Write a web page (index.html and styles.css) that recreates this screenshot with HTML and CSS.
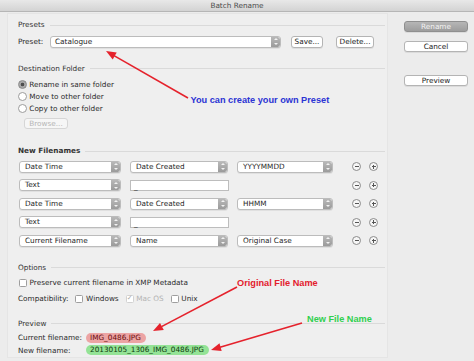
FILE: index.html
```html
<!DOCTYPE html>
<html>
<head>
    <title>Batch Rename</title>
    <link rel="stylesheet" href="styles.css">
</head>
<body>
    <div class="titlebar">Batch Rename</div>

    <div class="main">
        <div class="panel">
            <!-- Presets -->
            <section class="group">
                <div class="group-head">Presets</div>
                <div class="preset-row">
                    <span class="label">Preset:</span>
                    <div class="popup preset-popup"><span>Catalogue</span><i class="stepper"></i></div>
                    <button class="btn save">Save...</button>
                    <button class="btn delete">Delete...</button>
                </div>
            </section>

            <!-- Destination Folder -->
            <section class="group dest">
                <div class="group-head">Destination Folder</div>
                <div class="radios">
                    <div class="radio"><i class="on"></i>Rename in same folder</div>
                    <div class="radio"><i></i>Move to other folder</div>
                    <div class="radio"><i></i>Copy to other folder</div>
                </div>
                <button class="btn browse" disabled>Browse...</button>
            </section>

            <!-- New Filenames -->
            <section class="group names">
                <div class="group-head bold">New Filenames</div>
                <div class="fname-list">
                    <div class="fname-row">
                        <div class="popup"><span>Date Time</span><i class="stepper"></i></div>
                        <div class="popup"><span>Date Created</span><i class="stepper"></i></div>
                        <div class="popup"><span>YYYYMMDD</span><i class="stepper"></i></div>
                        <div class="ops"><i class="circ"></i><i class="circ plus"></i></div>
                    </div>
                    <div class="fname-row">
                        <div class="popup"><span>Text</span><i class="stepper"></i></div>
                        <div class="field">_</div>
                        <div></div>
                        <div class="ops"><i class="circ"></i><i class="circ plus"></i></div>
                    </div>
                    <div class="fname-row">
                        <div class="popup"><span>Date Time</span><i class="stepper"></i></div>
                        <div class="popup"><span>Date Created</span><i class="stepper"></i></div>
                        <div class="popup"><span>HHMM</span><i class="stepper"></i></div>
                        <div class="ops"><i class="circ"></i><i class="circ plus"></i></div>
                    </div>
                    <div class="fname-row">
                        <div class="popup"><span>Text</span><i class="stepper"></i></div>
                        <div class="field">_</div>
                        <div></div>
                        <div class="ops"><i class="circ"></i><i class="circ plus"></i></div>
                    </div>
                    <div class="fname-row">
                        <div class="popup"><span>Current Filename</span><i class="stepper"></i></div>
                        <div class="popup"><span>Name</span><i class="stepper"></i></div>
                        <div class="popup"><span>Original Case</span><i class="stepper"></i></div>
                        <div class="ops"><i class="circ"></i><i class="circ plus"></i></div>
                    </div>
                </div>
            </section>

            <!-- Options -->
            <section class="group options">
                <div class="group-head">Options</div>
                <div class="check-row first">
                    <span class="check"><i class="box"></i>Preserve current filename in XMP Metadata</span>
                </div>
                <div class="check-row">
                    <span>Compatibility:</span>
                    <span class="check spaced"><i class="box"></i>Windows</span>
                    <span class="check spaced disabled"><i class="box">✓</i>Mac OS</span>
                    <span class="check spaced"><i class="box"></i>Unix</span>
                </div>
            </section>

            <!-- Preview -->
            <section class="group preview">
                <div class="group-head">Preview</div>
                <div class="preview-row first">
                    <span class="label-wide">Current filename:</span>
                    <span class="pill red">IMG_0486.JPG</span>
                </div>
                <div class="preview-row">
                    <span class="label-wide">New filename:</span>
                    <span class="pill green">20130105_1306_IMG_0486.JPG</span>
                </div>
            </section>
        </div>

        <div class="actions">
            <button class="btn action default">Rename</button>
            <button class="btn action cancel">Cancel</button>
            <button class="btn action preview-btn">Preview</button>
        </div>
    </div>

    <!-- annotations drawn over the dialog -->
    <svg class="arrows" width="474" height="361" viewBox="0 0 474 361">
        <g stroke="#e5222c" stroke-width="1.6" fill="#e5222c">
            <line x1="188" y1="98" x2="114" y2="55.6"/>
            <polygon points="106,51 116.7,52.5 112.7,59.5" stroke="none"/>
            <line x1="237" y1="287" x2="161.5" y2="326.6"/>
            <polygon points="153,331 163.8,329.9 160,322.9" stroke="none"/>
            <line x1="302" y1="323" x2="220" y2="347.3"/>
            <polygon points="211,350 221.7,351 219.5,343.3" stroke="none"/>
        </g>
    </svg>
    <div class="note note-blue">You can create your own Preset</div>
    <div class="note note-red">Original File Name</div>
    <div class="note note-green">New File Name</div>
</body>
</html>
```

FILE: styles.css
```css
* {
    box-sizing: border-box;
}

body {
    margin: 0;
    width: 474px;
    height: 361px;
    overflow: hidden;
    position: relative;
    background: #ececec;
    font-family: "DejaVu Sans", sans-serif;
    font-size: 7.3px;
    color: #2b2b2b;
}

.titlebar {
    height: 12px;
    line-height: 11px;
    text-align: center;
    color: #4c4c4c;
    background: linear-gradient(#e8e8e8, #d3d3d3);
    border-bottom: 1px solid #b6b6b6;
}

.main {
    display: flex;
    align-items: flex-start;
}

.panel {
    width: 379px;
    margin: 2px 0 0 8px;
    padding: 6px 2px 2px 10px;
    background: #efefef;
    box-shadow: 0 0 0 1px #e5e5e5;
}

/* section headers with a rule to the right */
.group-head {
    display: flex;
    align-items: center;
    height: 10px;
    line-height: 10px;
    color: #333;
}

.group-head::after {
    content: "";
    flex: 1;
    height: 1px;
    margin-left: 5px;
    background: #dadada;
}

.group-head.bold {
    font-weight: bold;
}

.dest { margin-top: 16px; }
.names { margin-top: 17px; }
.options { margin-top: 16.3px; }
.preview { margin-top: 15px; }

/* popups, fields, buttons */
.popup {
    position: relative;
    display: flex;
    align-items: center;
    height: 12px;
    padding-left: 5px;
    background: #fff;
    border: 1px solid #bcbcbc;
    border-radius: 3px;
    box-shadow: 0 1px 0 rgba(0, 0, 0, 0.06);
    color: #262626;
    white-space: nowrap;
    overflow: hidden;
}

.popup span {
    flex: 1;
    line-height: 10px;
}

.stepper {
    position: relative;
    align-self: stretch;
    width: 9px;
    background: linear-gradient(#b8b8b8, #9b9b9b);
    border-radius: 0 2px 2px 0;
}

.stepper::before,
.stepper::after {
    content: "";
    position: absolute;
    left: 50%;
    margin-left: -2px;
    border-left: 2px solid transparent;
    border-right: 2px solid transparent;
}

.stepper::before {
    top: 1.5px;
    border-bottom: 2.5px solid #f2f2f2;
}

.stepper::after {
    bottom: 1.5px;
    border-top: 2.5px solid #f2f2f2;
}

.btn {
    font: inherit;
    height: 12px;
    padding: 0;
    line-height: 10px;
    color: #222;
    background: #fff;
    border: 1px solid #b4b4b4;
    border-radius: 3px;
    box-shadow: 0 1px 0 rgba(0, 0, 0, 0.07);
}

.preset-row {
    display: flex;
    align-items: center;
    height: 12px;
    margin-top: 5.5px;
}

.label {
    width: 32px;
}

.preset-popup {
    width: 231px;
    padding-left: 4px;
}

.save {
    width: 32px;
    margin-left: 10px;
}

.delete {
    width: 38px;
    margin-left: 13px;
}

/* destination */
.radios {
    margin-top: 4.5px;
}

.radio {
    display: flex;
    align-items: center;
    height: 12px;
}

.radio i {
    width: 9px;
    height: 9px;
    margin: 0 2.3px 0 0;
    border: 1px solid #9c9c9c;
    border-radius: 50%;
    background: #fff;
}

.radio i.on {
    border-color: #8a8a8a;
    background: radial-gradient(circle, #4e4e4e 0 1.6px, #a9a9a9 2.1px);
}

.browse {
    display: block;
    width: 44px;
    height: 11px;
    margin: 4px 0 0 6px;
    color: #b5b5b5;
    border-color: #d6d6d6;
    background: #f6f6f6;
    box-shadow: none;
}

/* new filenames */
.fname-list {
    display: grid;
    row-gap: 6.5px;
    margin-top: 4.7px;
}

.fname-row {
    display: grid;
    grid-template-columns: 102px 98px 96px auto;
    column-gap: 9px;
    align-items: center;
    height: 12px;
    margin-left: 1px;
}

.field {
    width: 99px;
    height: 11px;
    padding-left: 3px;
    line-height: 11px;
    background: #fff;
    border: 1px solid #bdbdbd;
}

.ops {
    display: flex;
    gap: 8px;
    margin-left: 10px;
}

.circ {
    position: relative;
    width: 9px;
    height: 9px;
    border: 1px solid #8c8c8c;
    border-radius: 50%;
    background: #f6f6f6;
}

.circ::before,
.circ.plus::after {
    content: "";
    position: absolute;
    background: #555;
}

.circ::before {
    left: 1.5px;
    top: 3px;
    width: 4px;
    height: 1px;
}

.circ.plus::after {
    left: 3px;
    top: 1.5px;
    width: 1px;
    height: 4px;
}

/* options */
.check-row {
    display: flex;
    align-items: center;
    height: 10px;
    margin-top: 6px;
}

.check-row.first {
    margin-top: 5px;
}

.check {
    display: flex;
    align-items: center;
}

.check.spaced {
    margin-left: 7px;
}

.box {
    display: inline-flex;
    align-items: center;
    justify-content: center;
    width: 8px;
    height: 8px;
    margin: 0 2.6px 0 1px;
    border: 1px solid #9e9e9e;
    border-radius: 1.5px;
    background: #fff;
    font-style: normal;
    font-size: 7px;
    line-height: 7px;
}

.check.spaced .box {
    margin-left: 0;
}

.disabled {
    color: #b3b3b3;
}

.disabled .box {
    border-color: #d2d2d2;
    color: #a9a9a9;
}

/* preview */
.preview-row {
    display: flex;
    align-items: center;
    height: 10px;
    margin-top: 2.5px;
}

.preview-row.first {
    margin-top: 4px;
}

.label-wide {
    width: 68px;
}

.pill {
    height: 10px;
    line-height: 10px;
    padding: 0 5px 0 4px;
    border-radius: 5px;
}

.pill.red {
    background: #eca4a4;
    color: #6a0c0c;
}

.pill.green {
    background: #94e396;
    color: #0d3a0d;
}

/* right column */
.actions {
    display: flex;
    flex-direction: column;
    padding-top: 9px;
    margin-left: 17px;
}

.action {
    width: 64px;
    height: 11px;
    line-height: 9px;
}

.default {
    color: #f3f3f3;
    background: linear-gradient(#b6b6b6, #9d9d9d);
    border-color: #8f8f8f;
}

.cancel {
    margin-top: 9px;
}

.preview-btn {
    margin-top: 23px;
}

/* annotations */
.arrows {
    position: absolute;
    left: 0;
    top: 0;
    pointer-events: none;
}

.note {
    position: absolute;
    font-family: "Liberation Sans", Arial, sans-serif;
    font-weight: bold;
    font-size: 9.2px;
    line-height: 11px;
    white-space: nowrap;
}

.note-blue {
    left: 190.5px;
    top: 94.5px;
    color: #2b34d4;
}

.note-red {
    left: 237px;
    top: 277.5px;
    color: #e3202d;
}

.note-green {
    left: 307px;
    top: 313.5px;
    color: #31cf4f;
}
```
